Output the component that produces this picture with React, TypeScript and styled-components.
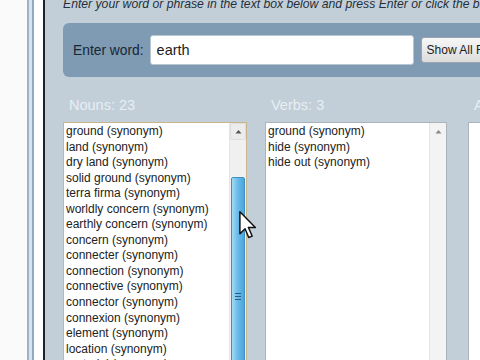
import { createGlobalStyle } from 'styled-components'
import styled from 'styled-components'

const GlobalStyle = createGlobalStyle`
  html, body {
    margin: 0;
    padding: 0;
    width: 480px;
    height: 360px;
    overflow: hidden;
    background: #fbfbfb;
    font-family: "Liberation Sans", Arial, sans-serif;
  }
`

const Screen = styled.div`
  display: flex;
  width: 480px;
  height: 360px;
  overflow: hidden;
  position: relative;
`

const Desktop = styled.div`
  width: 27px;
  flex: none;
  background: #fafafa;
`

const Frame = styled.div`
  width: 16px;
  flex: none;
  display: flex;
`

const FrameLine = styled.div<{ $w: number; $c: string }>`
  width: ${p => p.$w}px;
  flex: none;
  background: ${p => p.$c};
`

const Page = styled.div`
  flex: 1;
  min-width: 0;
  background: #c3cfd8;
  border-left: 2px solid #1e2328;
  padding-left: 18px;
  display: flex;
  flex-direction: column;
  overflow: hidden;
`

const Intro = styled.div`
  font-style: italic;
  font-size: 12.2px;
  color: #23303b;
  white-space: nowrap;
  margin-top: -3px;
  line-height: 15px;
`

const SearchPanel = styled.div`
  margin-top: 11px;
  height: 54px;
  width: 460px;
  border-radius: 6px;
  background: #7f9bb3;
  display: flex;
  align-items: center;
  padding-left: 10px;
  box-sizing: border-box;
  flex: none;
`

const SearchLabel = styled.span`
  font-size: 13.8px;
  color: #182634;
  margin-right: 6px;
`

const SearchInput = styled.div`
  width: 264px;
  height: 30px;
  box-sizing: border-box;
  background: #fff;
  border-radius: 3px;
  border: 1px solid #b8c6d2;
  display: flex;
  align-items: center;
  padding-left: 6px;
  font-size: 14.5px;
  color: #1e1e1e;
  flex: none;
`

const ShowButton = styled.div`
  margin-left: 7px;
  height: 26px;
  width: 90px;
  box-sizing: border-box;
  border: 1px solid #9aa4ae;
  border-radius: 3px;
  background: linear-gradient(#f7f7f7, #dcdcdc);
  display: flex;
  align-items: center;
  padding-left: 5px;
  font-size: 12px;
  color: #1c1c1c;
  white-space: nowrap;
  flex: none;
`

const Columns = styled.div`
  display: grid;
  grid-template-columns: 184px 182px 184px;
  column-gap: 18px;
  margin-top: 19px;
`

const Column = styled.div<{ $shift?: number }>`
  display: flex;
  flex-direction: column;
  margin-left: ${p => p.$shift ?? 0}px;
`

const ColumnTitle = styled.div`
  font-size: 14.5px;
  color: #e6eef4;
  padding-left: 6px;
  height: 18px;
  line-height: 18px;
  white-space: nowrap;
`

const ListBox = styled.div<{ $focused?: boolean }>`
  margin-top: 8px;
  height: 260px;
  box-sizing: border-box;
  background: #fff;
  border: 1px solid ${p => (p.$focused ? '#c9b68e' : '#aab4bd')};
  display: flex;
`

const Items = styled.div`
  flex: 1;
  padding: 1px 2px;
  overflow: hidden;
`

const Item = styled.div`
  font-size: 12px;
  line-height: 15.55px;
  color: #222;
  white-space: nowrap;
`

const ScrollTrack = styled.div<{ $idle?: boolean }>`
  width: 16px;
  flex: none;
  background: ${p => (p.$idle ? '#f3f3f3' : '#f0f0f0')};
  border-left: 1px solid #e4e4e4;
  display: flex;
  flex-direction: column;
`

const ScrollArrow = styled.div<{ $idle?: boolean }>`
  height: 15px;
  display: flex;
  align-items: center;
  justify-content: center;
  background: ${p => (p.$idle ? 'transparent' : '#ececec')};
  border: 1px solid ${p => (p.$idle ? 'transparent' : '#dedede')};
  border-radius: 2px;
`

const Thumb = styled.div<{ $top: number }>`
  margin-top: ${p => p.$top}px;
  flex: 1;
  margin-left: 1px;
  margin-right: 1px;
  border: 1px solid #3d8fc6;
  border-radius: 2px;
  background: linear-gradient(90deg, #a5d9f4, #6bbde9 45%, #4aa6dc);
  display: flex;
  justify-content: center;
  padding-top: 115px;
`

const Grip = styled.div`
  width: 6px;
  height: 7px;
  background: repeating-linear-gradient(#2c5d80 0 1px, transparent 1px 3px);
`

const Cursor = styled.svg`
  position: absolute;
  left: 239px;
  top: 211px;
`

const nouns = [
  'ground (synonym)',
  'land (synonym)',
  'dry land (synonym)',
  'solid ground (synonym)',
  'terra firma (synonym)',
  'worldly concern (synonym)',
  'earthly concern (synonym)',
  'concern (synonym)',
  'connecter (synonym)',
  'connection (synonym)',
  'connective (synonym)',
  'connector (synonym)',
  'connexion (synonym)',
  'element (synonym)',
  'location (synonym)',
  'material (synonym)',
]

const verbs = ['ground (synonym)', 'hide (synonym)', 'hide out (synonym)']

const UpArrow = ({ color }: { color: string }) => (
  <svg width="7" height="5" viewBox="0 0 7 5">
    <path d="M0.5 4.5 L3.5 1 L6.5 4.5 Z" fill={color} />
  </svg>
)

export default function App() {
  return (
    <>
      <GlobalStyle />
      <Screen>
        <Desktop />
        <Frame>
          <FrameLine $w={2} $c="#9fb3c4" />
          <FrameLine $w={3} $c="#d6e4ef" />
          <FrameLine $w={2} $c="#8fa9bf" />
          <FrameLine $w={9} $c="#ffffff" />
        </Frame>
        <Page>
          <Intro>Enter your word or phrase in the text box below and press Enter or click the button</Intro>
          <SearchPanel>
            <SearchLabel>Enter word:</SearchLabel>
            <SearchInput>earth</SearchInput>
            <ShowButton>Show All Results</ShowButton>
          </SearchPanel>
          <Columns>
            <Column>
              <ColumnTitle>Nouns: 23</ColumnTitle>
              <ListBox $focused>
                <Items>
                  {nouns.map(n => (
                    <Item key={n}>{n}</Item>
                  ))}
                </Items>
                <ScrollTrack>
                  <ScrollArrow>
                    <UpArrow color="#555" />
                  </ScrollArrow>
                  <Thumb $top={37}>
                    <Grip />
                  </Thumb>
                </ScrollTrack>
              </ListBox>
            </Column>
            <Column>
              <ColumnTitle>Verbs: 3</ColumnTitle>
              <ListBox>
                <Items>
                  {verbs.map(v => (
                    <Item key={v}>{v}</Item>
                  ))}
                </Items>
                <ScrollTrack $idle>
                  <ScrollArrow $idle>
                    <UpArrow color="#888" />
                  </ScrollArrow>
                </ScrollTrack>
              </ListBox>
            </Column>
            <Column $shift={3}>
              <ColumnTitle>Adjectives</ColumnTitle>
              <ListBox />
            </Column>
          </Columns>
        </Page>
        <Cursor width="18" height="28" viewBox="0 0 12 19">
          <path
            d="M0.5 0.5 L0.5 15.5 L4 12 L6.5 18 L8.8 17 L6.3 11.2 L11 11.2 Z"
            fill="#fff"
            stroke="#111"
            strokeWidth="1"
            strokeLinejoin="round"
          />
        </Cursor>
      </Screen>
    </>
  )
}
